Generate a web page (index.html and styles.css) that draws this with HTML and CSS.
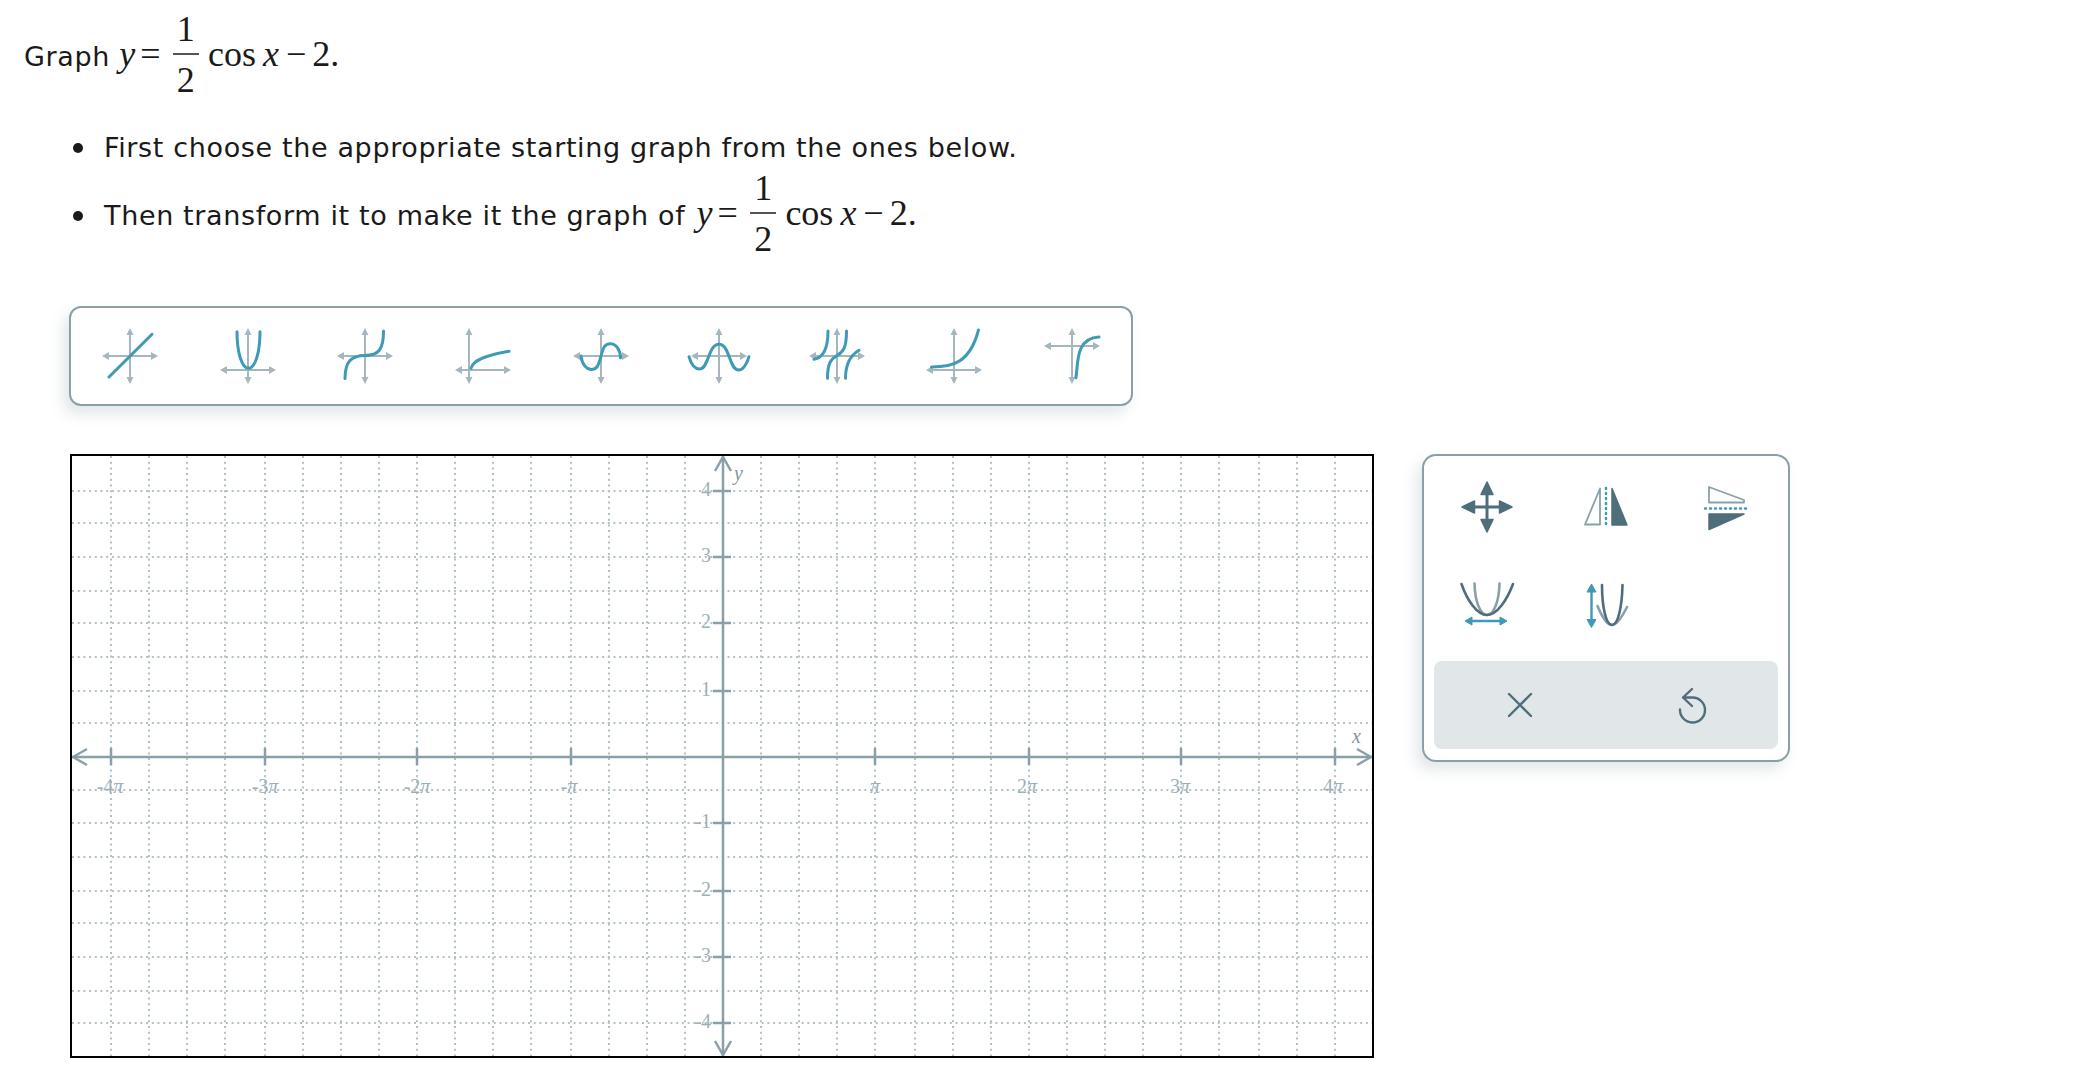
FILE: index.html
```html
<!DOCTYPE html>
<html lang="en">
<head>
  <meta charset="UTF-8">
  <title>Graph y = 1/2 cos x - 2</title>
  <link rel="stylesheet" href="styles.css">
</head>
<body>
  <svg class="defs" width="0" height="0">
    <defs>
      <g id="arrows-h">
        <path class="axis" d="M6 0H54"/>
        <path class="axis-head" d="M2 0l7-4v8zM58 0l-7-4v8z"/>
      </g>
      <g id="arrows-v">
        <path class="axis" d="M0 6V54"/>
        <path class="axis-head" d="M0 2l-3.500 7h7zM0 58l-3.500-7h7z"/>
      </g>
    </defs>
  </svg>

  <p class="statement">Graph <span class="math"><i class="lhs">y</i>=</span> <span class="frac"><span>1</span><span class="frac-low">2</span></span> <span class="math">cos<i class="var">x</i><span class="minus">&minus;</span>2.</span></p>

  <ul class="steps">
    <li>First choose the appropriate starting graph from the ones below.</li>
    <li>Then transform it to make it the graph of <span class="math lead"><i class="lhs">y</i>=</span> <span class="frac"><span>1</span><span class="frac-low">2</span></span> <span class="math">cos<i class="var">x</i><span class="minus">&minus;</span>2.</span></li>
  </ul>

  <div class="palette">
    <svg class="shape" viewBox="0 0 60 60"><use href="#arrows-h" y="30"/><use href="#arrows-v" x="30"/><path class="curve" d="M9 51L52 8.300"/></svg>
    <svg class="shape" viewBox="0 0 60 60"><use href="#arrows-h" y="44"/><use href="#arrows-v" x="30"/><path class="curve" d="M19 5.700C19 27 24 42.300 30.500 42.300C37 42.300 42 27 42 5.700"/></svg>
    <svg class="shape" viewBox="0 0 60 60"><use href="#arrows-h" y="30"/><use href="#arrows-v" x="30"/><path class="curve" d="M10 52.500C10 36 16 29.500 30 29.500C44 29.500 48.500 23 48.500 5"/></svg>
    <svg class="shape" viewBox="0 0 60 60"><use href="#arrows-h" y="44"/><use href="#arrows-v" x="16"/><path class="curve" d="M18 42.300C20 33 38 28.500 56 25.300"/></svg>
    <svg class="shape" viewBox="0 0 60 60"><use href="#arrows-h" y="30"/><use href="#arrows-v" x="30"/><path class="curve" d="M10 30C11 39 16 43.500 20.500 43.500C27 43.500 28 37 30 30C32 23 33 17.700 39.500 17.700C45 17.700 49.500 24 49.500 31.700"/></svg>
    <svg class="shape" viewBox="0 0 60 60"><use href="#arrows-h" y="30"/><use href="#arrows-v" x="30"/><path class="curve" d="M0 30.700C2 38 6 43 10.500 43C20 43 19 18.300 30 18.300C41 18.300 40 44 49.500 44C54 44 58 38 60 30.700"/></svg>
    <svg class="shape" viewBox="0 0 60 60"><use href="#arrows-h" y="30"/><use href="#arrows-v" x="30"/><path class="curve" d="M7 33.300C15 32 21 25 21 5M20.500 52.300C20.500 37 24 33 30 29.500C36 26 39.500 22 39.500 5M38.500 52.300C38.500 37 44 29 52 24.300"/></svg>
    <svg class="shape" viewBox="0 0 60 60"><use href="#arrows-h" y="44"/><use href="#arrows-v" x="30"/><path class="curve" d="M7.500 41C30 41 46 36 54.500 4"/></svg>
    <svg class="shape" viewBox="0 0 60 60"><use href="#arrows-h" y="20"/><use href="#arrows-v" x="30"/><path class="curve" d="M34 51.700C36 36 34 12 57 11"/></svg>
  </div>

  <div class="workspace">
    <div class="graph">
      <svg class="plane" width="1300" height="600" viewBox="0 0 1300 600">
        <path class="grid" d="M39 0V600M77 0V600M115 0V600M153 0V600M193 0V600M231 0V600M269 0V600M307 0V600M345 0V600M383 0V600M421 0V600M459 0V600M499 0V600M537 0V600M575 0V600M613 0V600M689 0V600M727 0V600M765 0V600M803 0V600M843 0V600M881 0V600M919 0V600M957 0V600M995 0V600M1033 0V600M1071 0V600M1109 0V600M1147 0V600M1187 0V600M1225 0V600M1263 0V600"/>
        <path class="grid" d="M0 35H1300M0 67H1300M0 101H1300M0 135H1300M0 167H1300M0 201H1300M0 235H1300M0 267H1300M0 334H1300M0 367H1300M0 401H1300M0 435H1300M0 467H1300M0 501H1300M0 535H1300M0 567H1300"/>
        <path class="plane-axis" d="M0 301H1300M651 0V600"/>
        <path class="plane-tick" d="M39 292V309M193 292V309M345 292V309M499 292V309M803 292V309M957 292V309M1109 292V309M1263 292V309M641 35H659M641 101H659M641 167H659M641 235H659M641 367H659M641 435H659M641 501H659M641 567H659"/>
        <path class="plane-arrow" d="M15 293L1 301L15 309M1285 293L1299 301L1285 309M643 15L651 1L659 15M643 585L651 599L659 585"/>
        <g class="xlabels">
          <text x="38" y="337">-4<tspan>&pi;</tspan></text>
          <text x="193" y="337">-3<tspan>&pi;</tspan></text>
          <text x="345" y="337">-2<tspan>&pi;</tspan></text>
          <text x="497" y="337">-<tspan>&pi;</tspan></text>
          <text x="803" y="337"><tspan>&pi;</tspan></text>
          <text x="955" y="337">2<tspan>&pi;</tspan></text>
          <text x="1108" y="337">3<tspan>&pi;</tspan></text>
          <text x="1261" y="337">4<tspan>&pi;</tspan></text>
        </g>
        <g class="ylabels">
          <text x="639" y="40">4</text>
          <text x="639" y="106">3</text>
          <text x="639" y="172">2</text>
          <text x="639" y="240">1</text>
          <text x="639" y="372">-1</text>
          <text x="639" y="440">-2</text>
          <text x="639" y="506">-3</text>
          <text x="639" y="572">-4</text>
        </g>
        <text class="axis-name" x="662" y="24">y</text>
        <text class="axis-name" x="1280" y="287">x</text>
      </svg>
    </div>

    <div class="tools">
      <div class="tool-grid">
        <svg class="tool" viewBox="0 0 60 60">
          <path class="dark-line" d="M30 8V52M8 30H52"/>
          <path class="dark-fill" d="M30 5l6 12.500h-12zM30 55l6-12.500h-12zM5 30l12.500-6v12zM55 30l-12.500-6v12z"/>
        </svg>
        <svg class="tool" viewBox="0 0 60 60">
          <path class="light-outline" d="M24 11.500V47.500H9z"/>
          <path class="dots" d="M30 11V51"/>
          <path class="dark-fill" d="M36 11.500V48H51z"/>
        </svg>
        <svg class="tool" viewBox="0 0 60 60">
          <path class="light-outline" d="M14 10L49 23V25.500H14z"/>
          <path class="dots" d="M10 31.500H51"/>
          <path class="dark-fill" d="M14 37H49L14 52.500z"/>
        </svg>
        <svg class="tool" viewBox="0 0 60 60">
          <path class="light-line" d="M17.500 10.500C18 28 23 42 30 42C37 42 42 28 42.500 10.500"/>
          <path class="dark-line thin" d="M4.500 11C10 27 20 42 30 42C40 42 50 27 56 11"/>
          <path class="teal-line" d="M12 48H46"/>
          <path class="teal-fill" d="M8 48l7-4v8zM50 48l-7-4v8z"/>
        </svg>
        <svg class="tool" viewBox="0 0 60 60">
          <path class="light-line" d="M21.500 33C25 42 31 52 36 52C41 52 47 42 51 34"/>
          <path class="dark-line thin" d="M26 12C26 34 30 52 36 52C42 52 46 34 46.500 12"/>
          <path class="teal-line" d="M15.500 15V50"/>
          <path class="teal-fill" d="M15.500 11l-4.500 8h9zM15.500 54.500l-4.500-8h9z"/>
        </svg>
      </div>
      <div class="tool-actions">
        <svg class="action" viewBox="0 0 30 30"><path d="M4 4L26 26M26 4L4 26"/></svg>
        <svg class="action" viewBox="0 0 30 30"><path d="M15 -1L6 7.500L15 16M6 7.500H15.500A12.500 12.500 0 1 1 3 19.500"/></svg>
      </div>
    </div>
  </div>
</body>
</html>
```
FILE: styles.css
```css
* {
  box-sizing: border-box;
}
html, body {
  margin: 0;
  background: #fff;
}
body {
  width: 2100px;
  height: 1070px;
  overflow: hidden;
  font-family: "DejaVu Sans", Verdana, sans-serif;
  font-size: 27px;
  letter-spacing: 0.64px;
  line-height: 28px;
  color: #1a1a1a;
}
.defs {
  position: absolute;
}
.statement {
  margin: 5px 0 0;
  padding: 0 0 0 24px;
}
.steps {
  margin: 22px 0 0;
  padding: 0 0 0 104px;
  list-style: none;
}
.steps li {
  margin-bottom: 2px;
}
.steps li::before {
  content: "";
  display: inline-block;
  width: 10px;
  height: 10px;
  margin: 0 21px 0 -31px;
  vertical-align: 4px;
  border-radius: 50%;
  background: #1a1a1a;
}
.math {
  font-family: "Liberation Serif", "Times New Roman", serif;
  font-size: 36px;
  letter-spacing: 0;
}
.math.lead {
  margin-left: 2px;
}
.math .lhs {
  margin-right: 5px;
}
.math .var {
  margin: 0 7px 0 7px;
}
.minus {
  margin-right: 6px;
}
.frac {
  display: inline-flex;
  flex-direction: column;
  align-items: center;
  vertical-align: middle;
  width: 26px;
  margin: 0 0 8px 3px;
  font-family: "Liberation Serif", "Times New Roman", serif;
  font-size: 36px;
  letter-spacing: 0;
  line-height: 48px;
}
.frac-low {
  width: 100%;
  padding-top: 1px;
  text-align: center;
  border-top: 2px solid #555;
}

.palette {
  display: grid;
  grid-template-columns: repeat(9, 1fr);
  align-items: center;
  justify-items: center;
  width: 1064px;
  height: 100px;
  margin: 35px 0 0 69px;
  background: #fff;
  border: 2px solid #8a9fa8;
  border-radius: 12px;
  box-shadow: -6px 8px 14px rgba(79, 110, 124, 0.16);
}
.shape {
  width: 60px;
  height: 60px;
  overflow: visible;
}
.axis {
  fill: none;
  stroke: #a6b6bd;
  stroke-width: 2;
}
.axis-head {
  fill: #a6b6bd;
}
.curve {
  fill: none;
  stroke: #3f9ab5;
  stroke-width: 3;
  stroke-linecap: round;
}

.workspace {
  display: flex;
  align-items: flex-start;
  gap: 48px;
  margin: 48px 0 0 70px;
}
.graph {
  flex: none;
  width: 1304px;
  height: 604px;
  border: 2px solid #000;
}
.plane {
  display: block;
}
.grid {
  fill: none;
  stroke: #b4c1c4;
  stroke-width: 2;
  stroke-dasharray: 2 3.700;
}
.plane-axis, .plane-tick, .plane-arrow {
  fill: none;
  stroke: #8a9fa8;
  stroke-width: 2.500;
}
.xlabels text, .ylabels text {
  font-family: "Liberation Serif", "Times New Roman", serif;
  font-size: 20px;
  letter-spacing: 0;
  fill: #9db0b8;
}
.xlabels text {
  text-anchor: middle;
}
.xlabels tspan {
  font-style: italic;
}
.ylabels text {
  text-anchor: end;
}
.axis-name {
  font-family: "Liberation Serif", "Times New Roman", serif;
  font-style: italic;
  font-size: 20px;
  letter-spacing: 0;
  fill: #7f959e;
}

.tools {
  flex: none;
  width: 368px;
  height: 308px;
  background: #fff;
  border: 2px solid #8a9fa8;
  border-radius: 14px;
  box-shadow: -6px 8px 14px rgba(79, 110, 124, 0.16);
}
.tool-grid {
  display: grid;
  grid-template-columns: repeat(3, 119px);
  grid-auto-rows: 96px;
  justify-content: center;
  padding-top: 3px;
  height: 205px;
}
.tool {
  width: 60px;
  height: 60px;
  margin: 18px auto;
  overflow: visible;
}
.dark-line {
  fill: none;
  stroke: #4f6e7c;
  stroke-width: 3;
}
.dark-line.thin {
  stroke-width: 2.600;
  stroke-linecap: round;
}
.dark-fill {
  fill: #4f6e7c;
  stroke: #4f6e7c;
  stroke-width: 1.500;
  stroke-linejoin: round;
}
.light-outline {
  fill: none;
  stroke: #8aa0a8;
  stroke-width: 1.800;
  stroke-linejoin: round;
}
.light-line {
  fill: none;
  stroke: #8aa0a8;
  stroke-width: 2.600;
  stroke-linecap: round;
}
.dots {
  fill: none;
  stroke: #3f9ab5;
  stroke-width: 2.500;
  stroke-linecap: round;
  stroke-dasharray: 1 4;
}
.teal-line {
  fill: none;
  stroke: #3f9ab5;
  stroke-width: 2.400;
}
.teal-fill {
  fill: #3f9ab5;
  stroke: #3f9ab5;
  stroke-width: 1;
  stroke-linejoin: round;
}
.tool-actions {
  display: grid;
  grid-template-columns: 1fr 1fr;
  align-items: center;
  justify-items: center;
  height: 88px;
  margin: 0 10px;
  background: #e1e6e9;
  border-radius: 8px;
}
.action {
  width: 30px;
  height: 30px;
  overflow: visible;
}
.action path {
  fill: none;
  stroke: #4f6e7c;
  stroke-width: 2.400;
  stroke-linecap: round;
  stroke-linejoin: round;
}
```
